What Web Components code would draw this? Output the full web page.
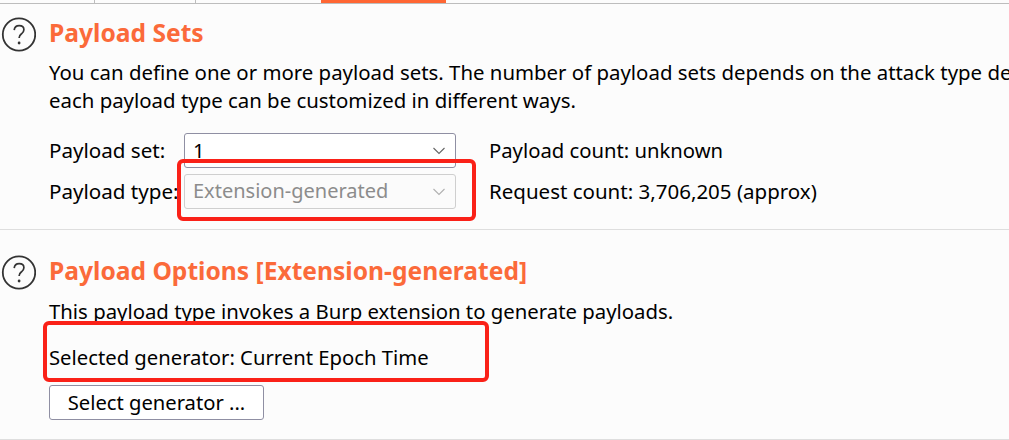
<!DOCTYPE html>
<html><head><meta charset="utf-8">
<style>
html,body{margin:0;padding:0;background:#fcfcfc}
body{width:1009px;height:440px;overflow:hidden;font:20.250px/28px "Noto Sans",sans-serif;color:#000;position:relative}
</style></head><body>
<template id="t-tabs"><style>
:host{display:flex;border-bottom:1px solid #bdbdbd;height:3px}
div{height:3px;box-sizing:border-box;border-right:1px solid #bdbdbd}
.a{width:95px}.b{width:101px}.c{width:125px;border:0}.d{width:125px;background:#ff6633;border:0}
</style><div class="a"></div><div class="b"></div><div class="c"></div><div class="d"></div></template>

<template id="t-section"><style>
:host{display:grid;grid-template-columns:49px 1fr;box-sizing:border-box;border-bottom:1px solid #dedede;width:1009px}
.ic{padding:0 0 0 1px}
svg{display:block;width:35px;height:35px}
h2{margin:0;font:700 24.600px/32px "Noto Sans",sans-serif;color:#fb6a3a;white-space:nowrap}
</style>
<div class="ic"><svg viewBox="0 0 35 35"><circle cx="18" cy="17.500" r="16.200" fill="none" stroke="#333" stroke-width="1.800"/><path d="M13.200 13.200c.3-2.900 2.300-4.500 5-4.500 2.800 0 4.700 1.700 4.700 4.100 0 1.900-1 2.900-2.400 4-1.500 1.100-2.400 2-2.400 4.200" fill="none" stroke="#333" stroke-width="1.700"/><circle cx="18.100" cy="26" r="1.400" fill="#333"/></svg></div>
<div class="body"><h2><slot name="title"></slot></h2><slot></slot></div></template>

<template id="t-select"><style>
:host{display:flex;align-items:center;justify-content:space-between;box-sizing:border-box;width:272px;height:35px;padding:0 10px 2px 8px;background:#fff;border:1px solid #8f8fa3;border-radius:3px;font:20.200px/28px "Noto Sans",sans-serif;color:#000}
:host([disabled]){background:#fbfbfb;border-color:#cfcfcf;color:#8c8c8c;font-size:20px}
svg{width:12px;height:8px;fill:none;stroke:#666;stroke-width:1.100;position:relative;top:1px}
:host([disabled]) svg{stroke:#b0b0b0}
</style><span><slot></slot></span><svg viewBox="0 0 12 8"><path d="M.5 1l5.500 5.500L11.500 1"/></svg></template>

<template id="t-button"><style>
:host{display:inline-flex;align-items:center;justify-content:center;box-sizing:border-box;width:215px;height:35px;padding-bottom:2px;background:#fff;border:1px solid #8f8fa3;border-radius:3px;font:20.200px/28px "Noto Sans",sans-serif}
</style><slot></slot></template>

<template id="t-mark"><style>
:host{display:block;position:absolute;box-sizing:border-box;border:4px solid #fa2118;border-radius:6px;pointer-events:none}
</style></template>

<script>
for (const [n,t] of [['bp-tabs','t-tabs'],['bp-section','t-section'],['bp-select','t-select'],['bp-button','t-button'],['bp-mark','t-mark']]) {
  customElements.define(n, class extends HTMLElement {
    constructor(){super();this.attachShadow({mode:'open'}).appendChild(document.getElementById(t).content.cloneNode(true));}
  });
}
</script>
<style>
#s1{padding-top:13px;height:226px}
#s2{padding-top:25px;height:210px}
p{margin:0;white-space:nowrap}
.intro{margin-top:10px;font-size:20.400px;line-height:27.500px}
.form{display:grid;grid-template-columns:135px 272px 1fr;row-gap:6px;margin-top:19px;align-items:center}
.form .v{margin-left:33px;padding-bottom:2px}
.form span{white-space:nowrap}
.l2{font-size:20.600px;padding-bottom:2px}
.wide{font-size:20.500px}
.sel{margin-top:18px}
.btn{margin-top:14px}
.d{margin-top:10px;font-size:20.330px}
</style>
<bp-tabs></bp-tabs>
<bp-section id="s1"><span slot="title">Payload Sets</span>
  <p class="intro">You can define one or more payload sets. The number of payload sets depends on the attack type de<br>each payload type can be customized in different ways.</p>
  <div class="form">
    <span class="l2">Payload set:</span><bp-select>1</bp-select><span class="v">Payload count: unknown</span>
    <span class="l2">Payload type:</span><bp-select disabled>Extension-generated</bp-select><span class="v wide">Request count: 3,706,205 (approx)</span>
  </div>
</bp-section>
<bp-section id="s2"><span slot="title">Payload Options [Extension-generated]</span>
  <p class="d">This payload type invokes a Burp extension to generate payloads.</p>
  <p class="sel">Selected generator: Current Epoch Time</p>
  <div class="btn"><bp-button>Select generator ...</bp-button></div>
</bp-section>
<bp-mark style="left:177px;top:159px;width:299px;height:62px"></bp-mark>
<bp-mark style="left:43px;top:321px;width:446px;height:61px"></bp-mark>
</body></html>
